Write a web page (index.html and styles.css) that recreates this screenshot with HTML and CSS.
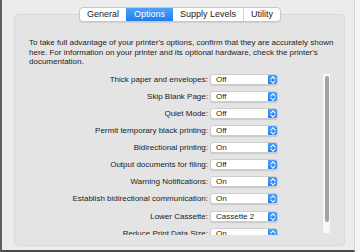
FILE: index.html
```html
<!DOCTYPE html>
<html lang="en">
<head>
    <meta charset="UTF-8">
    <title>Printer Options</title>
    <link rel="stylesheet" href="styles.css">
</head>
<body>
    <div class="window">
        <div class="tabs">
            <div class="tab">General</div>
            <div class="tab active">Options</div>
            <div class="tab">Supply Levels</div>
            <div class="tab">Utility</div>
        </div>

        <div class="panel">
            <p class="intro">To take full advantage of your printer's options, confirm that they are accurately shown here. For information on your printer and its optional hardware, check the printer's documentation.</p>

            <div class="scroll-area">
                <div class="rows">
                    <div class="label">Thick paper and envelopes:</div>
                    <div class="popup"><span>Off</span><i class="stepper"></i></div>

                    <div class="label">Skip Blank Page:</div>
                    <div class="popup"><span>Off</span><i class="stepper"></i></div>

                    <div class="label">Quiet Mode:</div>
                    <div class="popup"><span>Off</span><i class="stepper"></i></div>

                    <div class="label">Permit temporary black printing:</div>
                    <div class="popup"><span>Off</span><i class="stepper"></i></div>

                    <div class="label">Bidirectional printing:</div>
                    <div class="popup"><span>On</span><i class="stepper"></i></div>

                    <div class="label">Output documents for filing:</div>
                    <div class="popup"><span>Off</span><i class="stepper"></i></div>

                    <div class="label">Warning Notifications:</div>
                    <div class="popup"><span>On</span><i class="stepper"></i></div>

                    <div class="label">Establish bidirectional communication:</div>
                    <div class="popup"><span>On</span><i class="stepper"></i></div>

                    <div class="label">Lower Cassette:</div>
                    <div class="popup"><span>Cassette 2</span><i class="stepper"></i></div>

                    <div class="label">Reduce Print Data Size:</div>
                    <div class="popup"><span>On</span><i class="stepper"></i></div>
                </div>
                <div class="scrollbar">
                    <div class="thumb"></div>
                </div>
            </div>
        </div>
    </div>
</body>
</html>
```

FILE: styles.css
```css
* {
    margin: 0;
    padding: 0;
    box-sizing: border-box;
}

body {
    background: #f6f6f6;
    font-family: 'Liberation Sans', Arial, sans-serif;
    color: #1e1e1e;
}

.window {
    position: relative;
    width: 355px;
    height: 252px;
    background: #ececec;
    border-left: 2px solid #5e5e5e;
    border-bottom: 2px solid #4a4a4a;
    border-right: 1px solid #d6d6d6;
    padding: 14px 0 0 12px;
}

/* segmented control sits over the panel's top edge */
.tabs {
    position: absolute;
    top: 7px;
    left: 77px;
    display: flex;
    height: 15px;
    background: #fff;
    border: 1px solid #c6c6c6;
    border-radius: 4px;
    box-shadow: 0 1px 1px rgba(0, 0, 0, 0.08);
    z-index: 1;
}

.tab {
    font-size: 9px;
    line-height: 13px;
    color: #222;
    padding: 0 7px;
    border-left: 1px solid #d2d2d2;
}

.tab:first-child {
    border-left: none;
    width: 46px;
    text-align: center;
}

.tab.active {
    background: linear-gradient(#4da2f8, #1f7ef0);
    color: #fff;
    width: 47px;
    text-align: center;
    border-left: none;
}

.tab.active + .tab {
    border-left: none;
}

.panel {
    width: 331px;
    height: 232px;
    background: #e4e4e4;
    border: 1px solid #d9d9d9;
    border-radius: 4px;
    padding: 23px 0 0 14px;
}

.intro {
    font-size: 8px;
    line-height: 9.6px;
    width: 312px;
    color: #1c1c1c;
}

.scroll-area {
    display: flex;
    margin-top: 4px;
    height: 164px;
    margin-left: -14px;
}

.rows {
    display: grid;
    grid-template-columns: 193px 68px;
    column-gap: 2px;
    row-gap: 6.1px;
    align-items: center;
    align-content: start;
    padding-top: 3px;
    height: 164px;
    overflow: hidden;
}

.label {
    font-size: 8px;
    text-align: right;
    color: #1c1c1c;
    line-height: 11px;
}

.popup {
    display: flex;
    justify-content: space-between;
    height: 11px;
    background: #fff;
    border: 1px solid #cdcdcd;
    border-radius: 3px;
    box-shadow: 0 1px 1px rgba(0, 0, 0, 0.12);
    font-size: 8px;
    line-height: 9px;
    padding-left: 5px;
    overflow: hidden;
}

.stepper {
    width: 10px;
    margin: -1px -1px -1px 0;
    background: linear-gradient(#4ea4f9, #1c7cf0);
    border-radius: 0 3px 3px 0;
    position: relative;
}

.stepper::before,
.stepper::after {
    content: '';
    position: absolute;
    left: 3px;
    width: 3px;
    height: 3px;
    border-left: 1px solid #fff;
    border-top: 1px solid #fff;
    transform: rotate(45deg);
}

.stepper::before {
    top: 3px;
}

.stepper::after {
    top: 5px;
    transform: rotate(225deg);
}

.scrollbar {
    margin: 3px 0 0 44px;
    width: 8px;
    height: 159px;
    background: #f8f8f8;
    border-left: 1px solid #e2e2e2;
    padding: 2px 0 0 2px;
}

.thumb {
    width: 4px;
    height: 146px;
    background: #a3a3a3;
    border-radius: 2px;
}
```
